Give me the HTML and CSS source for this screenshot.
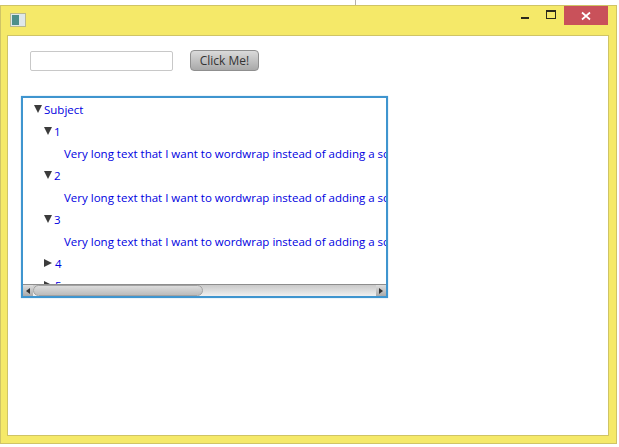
FILE: index.html
```html
<!DOCTYPE html>
<html lang="en">
<head>
    <meta charset="UTF-8">
    <meta name="viewport" content="width=device-width, initial-scale=1.0">
    <title>Tree demo</title>
    <link rel="stylesheet" href="styles.css">
</head>
<body>
    <div class="window">
        <header class="titlebar">
            <div class="app-icon"><span></span></div>
            <div class="win-controls">
                <div class="win-btn"><span class="minimize"></span></div>
                <div class="win-btn"><span class="maximize"></span></div>
                <div class="win-close">
                    <svg width="10" height="10" viewBox="0 0 10 10"><path d="M1 1.5 L9 8.5 M9 1.5 L1 8.5" stroke="#fff" stroke-width="1.7"/></svg>
                </div>
            </div>
        </header>

        <main class="content">
            <div class="form-row">
                <input type="text" class="text-input">
                <button class="click-btn">Click Me!</button>
            </div>

            <section class="tree">
                <div class="tree-rows">
                    <div class="row level-0"><span class="arrow open"></span>Subject</div>
                    <div class="row level-1"><span class="arrow open"></span>1</div>
                    <div class="row level-2">Very long text that I want to wordwrap instead of adding a scrollbar</div>
                    <div class="row level-1"><span class="arrow open"></span>2</div>
                    <div class="row level-2">Very long text that I want to wordwrap instead of adding a scrollbar</div>
                    <div class="row level-1"><span class="arrow open"></span>3</div>
                    <div class="row level-2">Very long text that I want to wordwrap instead of adding a scrollbar</div>
                    <div class="row level-1"><span class="arrow closed"></span>4</div>
                    <div class="row level-1"><span class="arrow closed"></span>5</div>
                </div>
                <div class="scrollbar">
                    <div class="scroll-btn"><span class="tri-left"></span></div>
                    <div class="scroll-track"><div class="scroll-thumb"></div></div>
                    <div class="scroll-btn"><span class="tri-right"></span></div>
                </div>
            </section>
        </main>
    </div>
</body>
</html>
```

FILE: styles.css
```css
* {
    margin: 0;
    padding: 0;
    box-sizing: border-box;
}

body {
    font-family: "Open Sans", "Noto Sans", sans-serif;
    font-size: 11.5px;
    background: #fff;
    width: 619px;
    height: 447px;
    overflow: hidden;
    position: relative;
}

/* thin line of whatever sits behind the window */
body::before {
    content: "";
    position: absolute;
    left: 355px;
    top: 0;
    width: 1px;
    height: 5px;
    background: #b5b0ac;
}

/* Window frame */
.window {
    margin-top: 5px;
    width: 617px;
    height: 439px;
    background: #f5e969;
    border: 1px solid #cfc466;
    display: flex;
    flex-direction: column;
}

.titlebar {
    height: 29px;
    padding-left: 9px;
    display: flex;
    justify-content: space-between;
    align-items: flex-start;
}

.app-icon {
    width: 16px;
    height: 14px;
    margin-top: 7px;
    background: #dfe8ea;
    border: 1px solid #b9b98e;
}

.app-icon span {
    display: block;
    width: 7px;
    height: 10px;
    margin: 1px 0 0 1px;
    background: #4d8f8a;
}

.win-controls {
    display: flex;
    margin-right: 8px;
}

.win-btn {
    width: 26px;
    height: 19px;
    display: flex;
    align-items: center;
    justify-content: center;
}

.minimize {
    width: 8px;
    height: 2px;
    margin-top: 4px;
    background: #2b2a1c;
}

.maximize {
    width: 10px;
    height: 9px;
    border: 1px solid #2b2a1c;
    border-top-width: 2px;
    margin-top: -2px;
}

.win-close {
    width: 44px;
    height: 19px;
    background: #c9515a;
    display: flex;
    align-items: center;
    justify-content: center;
}

/* Client area */
.content {
    flex: 1;
    margin: 0 7px 7px 6px;
    background: #fff;
    border: 1px solid #cfc466;
    padding: 14px 0 0 13px;
}

.form-row {
    display: flex;
    align-items: center;
    gap: 17px;
    margin-left: 9px;
    margin-bottom: 25px;
}

.text-input {
    width: 143px;
    height: 20px;
    border: 1px solid #c8c8c8;
    border-radius: 2px;
    background: #fff;
}

.click-btn {
    width: 69px;
    height: 21px;
    border: 1px solid #8f8f8f;
    border-radius: 4px;
    background: linear-gradient(#dadada, #a9a9a9);
    font-family: inherit;
    font-size: 12px;
    color: #333;
}

/* Tree view */
.tree {
    width: 367px;
    height: 202px;
    border: 2px solid #3f95cf;
    box-shadow: 0 0 1px #8cc0e4;
    display: flex;
    flex-direction: column;
    background: #fff;
}

.tree-rows {
    flex: 1;
    min-height: 0;
    overflow: hidden;
    padding-top: 1px;
}

.row {
    height: 22px;
    line-height: 22px;
    color: #0000e0;
    white-space: nowrap;
}

.level-0 {
    padding-left: 11px;
}

.level-1 {
    padding-left: 21px;
}

.level-2 {
    padding-left: 41px;
}

.arrow {
    display: inline-block;
    width: 0;
    height: 0;
    vertical-align: 1px;
}

.arrow.open {
    border-left: 4.5px solid transparent;
    border-right: 4.5px solid transparent;
    border-top: 8px solid #3c3c3c;
    margin-right: 2px;
}

.arrow.closed {
    border-top: 4.5px solid transparent;
    border-bottom: 4.5px solid transparent;
    border-left: 8px solid #3c3c3c;
    margin-right: 3px;
}

/* Scrollbar */
.scrollbar {
    height: 12px;
    display: flex;
    border-top: 1px solid #8e8e8e;
    background: linear-gradient(#c9c9c9, #f0f0f0);
}

.scroll-btn {
    width: 10px;
    display: flex;
    align-items: center;
    justify-content: center;
    background: linear-gradient(#ddd, #aaa);
}

.tri-left {
    border-top: 3px solid transparent;
    border-bottom: 3px solid transparent;
    border-right: 4px solid #333;
}

.tri-right {
    border-top: 3px solid transparent;
    border-bottom: 3px solid transparent;
    border-left: 4px solid #333;
}

.scroll-track {
    flex: 1;
}

.scroll-thumb {
    width: 170px;
    height: 11px;
    border: 1px solid #a2a2a2;
    border-radius: 6px;
    background: linear-gradient(#dcdcdc, #bcbcbc);
}
```
